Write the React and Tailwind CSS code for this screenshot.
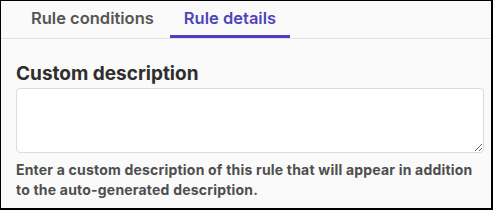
import React, { useState } from "react";

export default function App() {
  const [tab, setTab] = useState("details");
  const [desc, setDesc] = useState("");

  return (
    <div
      className="w-[493px] h-[210px] overflow-hidden border-l border-t border-r-2 border-b-2 border-black bg-[#fafafa] text-[#333]"
      style={{ fontFamily: "Inter, 'Noto Sans', sans-serif" }}
    >
      <div className="flex h-[38px] items-stretch gap-[2px] border-b border-[#e2e2e2] pl-[16px]">
        <button
          type="button"
          onClick={() => setTab("conditions")}
          className={`px-[14px] pt-[1px] text-[16.5px] font-semibold border-b-[3px] ${
            tab === "conditions" ? "text-[#4f44b9] border-[#4b3fbf]" : "text-[#555] border-transparent"
          }`}
        >
          Rule conditions
        </button>
        <button
          type="button"
          onClick={() => setTab("details")}
          className={`px-[14px] pt-[1px] text-[16.5px] font-semibold border-b-[3px] ${
            tab === "details" ? "text-[#4f44b9] border-[#4b3fbf]" : "text-[#555] border-transparent"
          }`}
        >
          Rule details
        </button>
      </div>

      <div className="px-[15px] pt-[23px]">
        <label htmlFor="custom-desc" className="block text-[19px] font-bold leading-[23px] text-[#2e2e2e]">
          Custom description
        </label>
        <textarea
          id="custom-desc"
          value={desc}
          onChange={(e) => setDesc(e.target.value)}
          className="mt-[3px] block h-[65px] w-[468px] rounded-[4px] border border-[#dcdcdc] bg-white px-2 py-1 text-sm outline-none focus:border-[#4b3fbf]"
        />
        <p className="mt-[7px] max-w-[466px] text-[14px] font-bold leading-[20px] tracking-[0.2px] text-[#4e4e4e]">
          Enter a custom description of this rule that will appear in addition to the auto-generated description.
        </p>
      </div>
    </div>
  );
}
